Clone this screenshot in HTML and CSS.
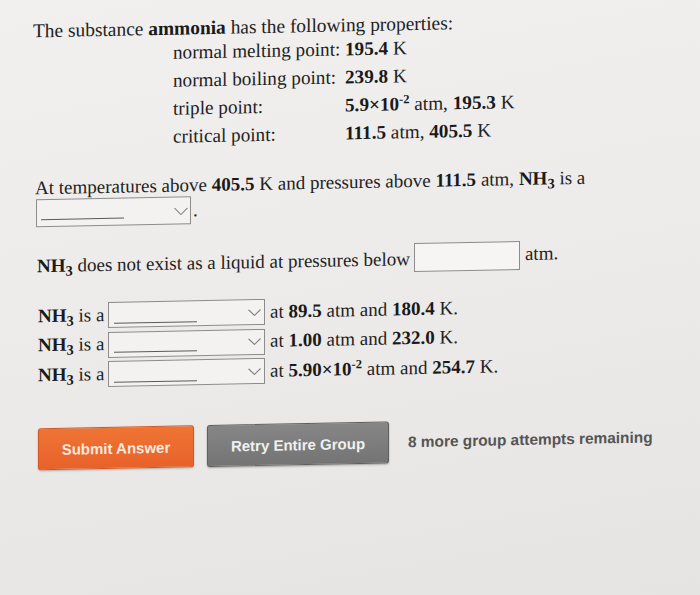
FILE: index.html
```html
<!DOCTYPE html>
<html>
<head>
<meta charset="utf-8">
<link rel="stylesheet" href="styles.css">
</head>
<body>
<div class="page">
  <p class="intro">The substance <b>ammonia</b> has the following properties:</p>
  <div class="props">
    <span>normal melting point:</span><span><b>195.4</b> K</span>
    <span>normal boiling point:</span><span><b>239.8</b> K</span>
    <span>triple point:</span><span><b>5.9×10<sup>-2</sup></b> atm, <b>195.3</b> K</span>
    <span>critical point:</span><span><b>111.5</b> atm, <b>405.5</b> K</span>
  </div>

  <p class="q1">At temperatures above <b>405.5</b> K and pressures above <b>111.5</b> atm, <b>NH<sub>3</sub></b> is a</p>
  <div class="q1sel">
    <span class="select sel-small"><span class="blank"></span><svg class="chev" width="14" height="8" viewBox="0 0 14 8"><path d="M0.5 0.5 L7 7 L13.5 0.5" fill="none" stroke="#858585" stroke-width="1.1"/></svg></span><span class="dot">.</span>
  </div>

  <div class="q2">
    <span class="q2text"><b>NH<sub>3</sub></b> does not exist as a liquid at pressures below</span>
    <span class="input"></span>
    <span class="atm">atm.</span>
  </div>

  <div class="rows">
    <div class="row">
      <span class="rlbl"><b>NH<sub>3</sub></b> is a</span>
      <span class="select sel-wide"><span class="blank"></span><svg class="chev" width="13" height="7" viewBox="0 0 13 7"><path d="M0.5 0.5 L6.5 6.3 L12.5 0.5" fill="none" stroke="#858585" stroke-width="1.1"/></svg></span>
      <span class="rtxt">at <b>89.5</b> atm and <b>180.4</b> K.</span>
    </div>
    <div class="row">
      <span class="rlbl"><b>NH<sub>3</sub></b> is a</span>
      <span class="select sel-wide"><span class="blank"></span><svg class="chev" width="13" height="7" viewBox="0 0 13 7"><path d="M0.5 0.5 L6.5 6.3 L12.5 0.5" fill="none" stroke="#858585" stroke-width="1.1"/></svg></span>
      <span class="rtxt">at <b>1.00</b> atm and <b>232.0</b> K.</span>
    </div>
    <div class="row">
      <span class="rlbl"><b>NH<sub>3</sub></b> is a</span>
      <span class="select sel-wide"><span class="blank"></span><svg class="chev" width="13" height="7" viewBox="0 0 13 7"><path d="M0.5 0.5 L6.5 6.3 L12.5 0.5" fill="none" stroke="#858585" stroke-width="1.1"/></svg></span>
      <span class="rtxt">at <b>5.90×10<sup>-2</sup></b> atm and <b>254.7</b> K.</span>
    </div>
  </div>

  <div class="buttons">
    <span class="btn submit">Submit Answer</span>
    <span class="btn retry">Retry Entire Group</span>
    <span class="remain">8 more group attempts remaining</span>
  </div>
</div>
</body>
</html>
```

FILE: styles.css
```css
html, body {
  margin: 0;
  padding: 0;
}
body {
  width: 700px;
  height: 595px;
  overflow: hidden;
  background: linear-gradient(170deg, #f1f0ee 0%, #ecebe9 50%, #e5e4e2 100%);
  font-family: "Liberation Serif", "Times New Roman", serif;
  font-size: 19px;
  color: #222;
}
.page {
  padding: 19.5px 0 0 33px;
  transform: skewY(-1.1deg);
  transform-origin: 0 0;
}
b { color: #1a1a1a; }
sup {
  font-size: 12.5px;
  vertical-align: 7px;
  line-height: 0;
}
sub {
  font-size: 14.5px;
  vertical-align: -4px;
  line-height: 0;
}
.intro {
  margin: 0;
  font-size: 19.4px;
  line-height: 24px;
}
.props {
  display: grid;
  grid-template-columns: 172px auto;
  grid-auto-rows: 28px;
  line-height: 28px;
  font-size: 19.2px;
  margin: -1.4px 0 0 140px;
}
.q1 {
  margin: 22.6px 0 0 2px;
  line-height: 24px;
}
.q1sel {
  display: flex;
  align-items: flex-start;
  margin: -1px 0 0 3px;
}
.select {
  display: flex;
  align-items: flex-start;
  justify-content: space-between;
  box-sizing: border-box;
  border: 1.5px solid #8c8c8c;
  background: #f3f2f0;
}
.sel-small {
  width: 155px;
  height: 28px;
  padding: 0 2.5px 0 3.5px;
}
.sel-small .blank { margin-top: 19.5px; }
.sel-small .chev { margin-top: 10.5px; }
.sel-wide {
  width: 157px;
  height: 26px;
  padding: 0 3.5px 0 4.5px;
}
.sel-wide .blank { margin-top: 19.5px; }
.sel-wide .chev { margin-top: 8.5px; }
.blank {
  display: block;
  width: 83px;
  border-bottom: 1.4px solid #5a5a5a;
}
.dot {
  margin-left: 2px;
  line-height: 28px;
}
.q2 {
  display: flex;
  align-items: flex-start;
  margin: 23.5px 0 0 4px;
}
.q2text {
  margin-top: 3.6px;
  line-height: 24px;
}
.input {
  display: block;
  box-sizing: border-box;
  width: 106px;
  height: 29px;
  border: 1.5px solid #8c8c8c;
  background: #f6f5f3;
  margin-left: 4px;
}
.atm {
  margin-left: 5px;
  margin-top: 1px;
  line-height: 24px;
}
.rows {
  margin: 24px 0 0 5px;
  display: flex;
  flex-direction: column;
  gap: 3.5px;
}
.row {
  display: flex;
  align-items: flex-start;
}
.rlbl {
  width: 70px;
  margin-top: 0.6px;
  line-height: 24px;
}
.rtxt {
  margin-left: 5px;
  margin-top: 0.6px;
  line-height: 24px;
}
.buttons {
  display: flex;
  align-items: center;
  margin: 40px 0 0 5px;
}
.btn {
  display: flex;
  align-items: center;
  justify-content: center;
  box-sizing: border-box;
  height: 42px;
  font-family: "Liberation Sans", Arial, sans-serif;
  font-weight: bold;
  font-size: 15px;
  border-radius: 3px;
}
.submit {
  width: 156px;
  background: linear-gradient(#ef7434, #e8622a);
  border: 1px solid #d45622;
  box-shadow: 0 1px 2px rgba(0,0,0,0.25);
  color: #fbe9df;
}
.retry {
  width: 182px;
  margin-left: 13px;
  background: linear-gradient(#868686, #747474);
  border: 1px solid #5e5e5e;
  box-shadow: 0 1px 2px rgba(0,0,0,0.3);
  color: #f0f0f0;
}
.remain {
  margin-left: 19px;
  font-family: "Liberation Sans", Arial, sans-serif;
  font-weight: bold;
  font-size: 15.4px;
  color: #555;
}
```
